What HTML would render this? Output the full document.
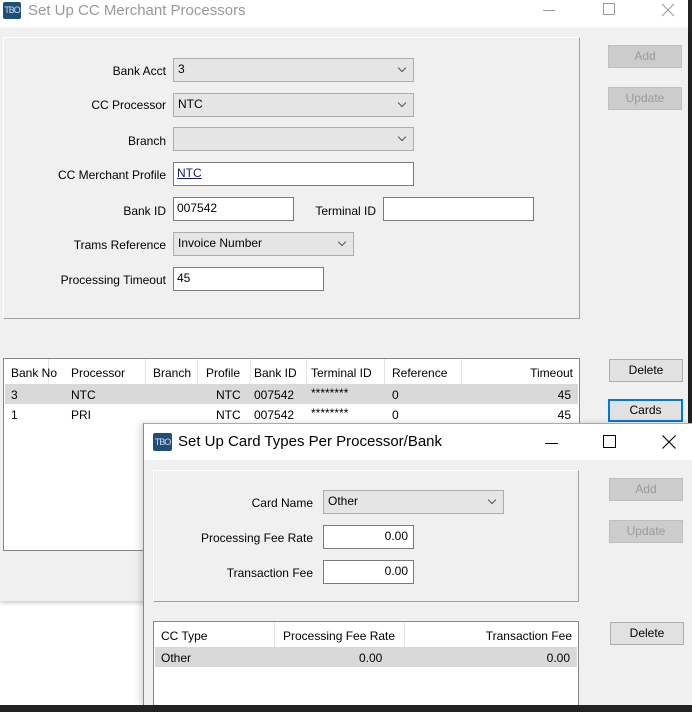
<!DOCTYPE html>
<html><head><meta charset="utf-8"><style>
*{box-sizing:border-box;margin:0;padding:0}
body{width:692px;height:712px;position:relative;overflow:hidden;background:#fff;font-family:"Liberation Sans",sans-serif;font-size:12px;color:#000}
.a{position:absolute}
.lbl{position:absolute;text-align:right;white-space:nowrap}
.combo{position:absolute;background:#e5e5e5;border:1px solid #adadad;padding:3px 4px;height:24px}
.combo:after{content:"";position:absolute;right:8px;top:6px;width:5px;height:5px;border-right:1px solid #555;border-bottom:1px solid #555;transform:rotate(45deg)}
.box{position:absolute;background:#fff;border:1px solid #7a7a7a;padding:3px 3px;height:24px}
.btn{position:absolute;border:1px solid #adadad;background:#e1e1e1;text-align:center;line-height:21px;height:23px}
.dis{background:#cccccc;border-color:#bfbfbf;color:#9a9a9a}
.grp{position:absolute;border:1px solid #fff;border-right-color:#a0a0a0;border-bottom-color:#a0a0a0}
.list{position:absolute;background:#fff;border:1px solid #828790}
.cell{position:absolute;white-space:nowrap}
.sep{position:absolute;top:0;width:1px;height:25px;background:#e5e5e5}
.icon{position:absolute;background:#1f4e79;color:#cfe0f0;font-size:9px;line-height:17px;text-align:center;border-radius:2px;letter-spacing:-1px}
</style></head><body>
<!-- main window -->
<div class="a" style="left:0;top:0;width:688px;height:28px;background:#fff"></div>
<div class="icon" style="left:3px;top:2px;width:18px;height:17px">TBO</div>
<div class="a" style="left:28px;top:2px;font-size:15px;color:#999">Set Up CC Merchant Processors</div>
<div class="a" style="left:543px;top:10px;width:12px;height:1px;background:#999"></div>
<div class="a" style="left:603px;top:3px;width:12px;height:12px;border:1px solid #999"></div>
<svg class="a" style="left:660px;top:2px" width="16" height="16"><path d="M2 2L14 14M14 2L2 14" stroke="#999" stroke-width="1"/></svg>
<div class="a" style="left:688px;top:0;width:4px;height:712px;background:#222"></div>
<div class="a" style="left:0;top:28px;width:688px;height:573px;background:#f0f0f0;box-shadow:0 2px 4px rgba(0,0,0,.2)"></div>

<div class="grp" style="left:3px;top:37px;width:577px;height:282px"></div>
<div class="lbl" style="right:526px;top:64px">Bank Acct</div>
<div class="combo" style="left:173px;top:58px;width:241px">3</div>
<div class="lbl" style="right:526px;top:98px">CC Processor</div>
<div class="combo" style="left:173px;top:93px;width:241px">NTC</div>
<div class="lbl" style="right:526px;top:134px">Branch</div>
<div class="combo" style="left:173px;top:127px;width:241px"></div>
<div class="lbl" style="right:526px;top:168px">CC Merchant Profile</div>
<div class="box" style="left:173px;top:162px;width:241px;color:#000"><span style="text-decoration:underline;color:#1a1a6a">NTC</span></div>
<div class="lbl" style="right:526px;top:204px">Bank ID</div>
<div class="box" style="left:173px;top:197px;width:121px">007542</div>
<div class="lbl" style="right:316px;top:204px">Terminal ID</div>
<div class="box" style="left:383px;top:197px;width:151px"></div>
<div class="lbl" style="right:526px;top:238px">Trams Reference</div>
<div class="combo" style="left:173px;top:232px;width:181px">Invoice Number</div>
<div class="lbl" style="right:526px;top:273px">Processing Timeout</div>
<div class="box" style="left:173px;top:267px;width:151px">45</div>

<div class="btn dis" style="left:608px;top:45px;width:74px">Add</div>
<div class="btn dis" style="left:608px;top:87px;width:74px">Update</div>
<div class="btn" style="left:609px;top:359px;width:74px">Delete</div>
<div class="btn" style="left:608px;top:399px;width:75px;border:2px solid #0078d7;line-height:19px">Cards</div>

<div class="list" style="left:3px;top:358px;width:577px;height:193px">
 <div class="sep" style="left:44px"></div><div class="sep" style="left:141px"></div><div class="sep" style="left:193px"></div><div class="sep" style="left:246px"></div><div class="sep" style="left:302px"></div><div class="sep" style="left:380px"></div><div class="sep" style="left:457px"></div>
 <div class="cell" style="left:7px;top:7px">Bank No</div>
 <div class="cell" style="left:67px;top:7px">Processor</div>
 <div class="cell" style="left:149px;top:7px">Branch</div>
 <div class="cell" style="left:202px;top:7px">Profile</div>
 <div class="cell" style="left:250px;top:7px">Bank ID</div>
 <div class="cell" style="left:307px;top:7px">Terminal ID</div>
 <div class="cell" style="left:388px;top:7px">Reference</div>
 <div class="cell" style="right:6px;top:7px">Timeout</div>
 <div class="a" style="left:1px;top:25px;width:573px;height:20px;background:#d9d9d9"></div>
 <div class="cell" style="left:7px;top:29px">3</div><div class="cell" style="left:67px;top:29px">NTC</div><div class="cell" style="left:212px;top:29px">NTC</div><div class="cell" style="left:250px;top:29px">007542</div><div class="cell" style="left:307px;top:27px">********</div><div class="cell" style="left:388px;top:29px">0</div><div class="cell" style="right:8px;top:29px">45</div>
 <div class="cell" style="left:7px;top:49px">1</div><div class="cell" style="left:67px;top:49px">PRI</div><div class="cell" style="left:212px;top:49px">NTC</div><div class="cell" style="left:250px;top:49px">007542</div><div class="cell" style="left:307px;top:47px">********</div><div class="cell" style="left:388px;top:49px">0</div><div class="cell" style="right:8px;top:49px">45</div>
</div>

<!-- dialog -->
<div class="a" style="left:143px;top:423px;width:549px;height:283px;background:#f0f0f0;border-left:1px solid #888;border-top:1px solid #aaa;box-shadow:-3px 0 6px rgba(0,0,0,.15)"></div>
<div class="a" style="left:144px;top:424px;width:548px;height:36px;background:#fff"></div>
<div class="icon" style="left:153px;top:433px;width:19px;height:18px;line-height:18px">TBO</div>
<div class="a" style="left:178px;top:433px;font-size:15px">Set Up Card Types Per Processor/Bank</div>
<div class="a" style="left:545px;top:443px;width:13px;height:1px;background:#000"></div>
<div class="a" style="left:603px;top:435px;width:13px;height:13px;border:1px solid #000"></div>
<svg class="a" style="left:661px;top:434px" width="16" height="16"><path d="M1.5 1.5L14.5 14.5M14.5 1.5L1.5 14.5" stroke="#000" stroke-width="1.1"/></svg>

<div class="grp" style="left:153px;top:470px;width:426px;height:132px"></div>
<div class="lbl" style="right:379px;top:496px">Card Name</div>
<div class="combo" style="left:323px;top:490px;width:181px">Other</div>
<div class="lbl" style="right:379px;top:531px">Processing Fee Rate</div>
<div class="box" style="left:323px;top:525px;width:91px;text-align:right;padding-right:5px">0.00</div>
<div class="lbl" style="right:379px;top:566px">Transaction Fee</div>
<div class="box" style="left:323px;top:560px;width:91px;text-align:right;padding-right:5px">0.00</div>

<div class="btn dis" style="left:609px;top:478px;width:74px">Add</div>
<div class="btn dis" style="left:609px;top:520px;width:74px">Update</div>
<div class="btn" style="left:610px;top:622px;width:74px">Delete</div>

<div class="list" style="left:153px;top:621px;width:426px;height:90px">
 <div class="sep" style="left:120px"></div><div class="sep" style="left:250px"></div>
 <div class="cell" style="left:7px;top:7px">CC Type</div>
 <div class="cell" style="left:129px;top:7px">Processing Fee Rate</div>
 <div class="cell" style="right:6px;top:7px">Transaction Fee</div>
 <div class="a" style="left:1px;top:25px;width:422px;height:20px;background:#d9d9d9"></div>
 <div class="cell" style="left:7px;top:29px">Other</div>
 <div class="cell" style="left:205px;top:29px">0.00</div>
 <div class="cell" style="right:8px;top:29px">0.00</div>
</div>

<div class="a" style="left:0;top:705px;width:692px;height:7px;background:#222"></div>
</body></html>
